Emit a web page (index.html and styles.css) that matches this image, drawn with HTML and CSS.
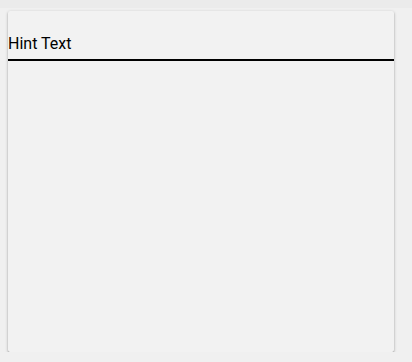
FILE: index.html
```html
<!DOCTYPE html>
<html>
<head>
<meta charset="utf-8">
<link rel="stylesheet" href="styles.css">
</head>
<body>
<div class="topbar"></div>
<div class="card">
  <div class="field">
    <span class="hint">Hint Text</span>
  </div>
</div>
</body>
</html>
```
FILE: styles.css
```css
html, body {
  margin: 0;
  padding: 0;
  background: #f0f0f0;
  font-family: Roboto, "Liberation Sans", sans-serif;
}
.topbar {
  height: 8px;
  background: #ebebeb;
}
.card {
  margin: 3px 18px 0 8px;
  height: 341px;
  background: #f2f2f2;
  border-radius: 2px;
  box-shadow: 0 1px 3px rgba(0,0,0,0.3), 0 1px 1px rgba(0,0,0,0.2);
  box-sizing: border-box;
}
.field {
  padding-top: 23px;
  padding-bottom: 6px;
  height: 19px;
  border-bottom: 2px solid #000;
}
.hint {
  display: block;
  font-size: 16px;
  color: #000;
  line-height: 19px;
}
```
